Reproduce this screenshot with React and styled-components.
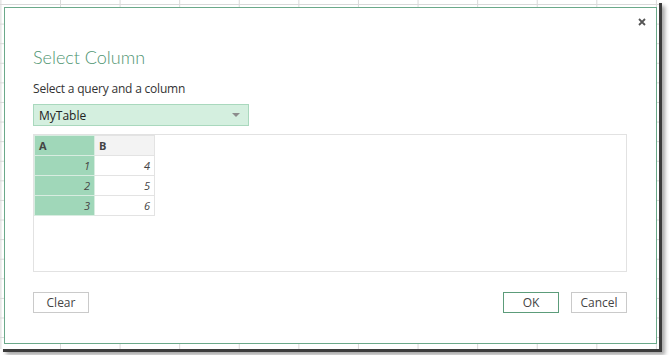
import React from 'react'
import styled, { createGlobalStyle } from 'styled-components';

const GlobalStyle = createGlobalStyle`
  html, body {
    margin: 0;
    padding: 0;
    background: #fff;
  }
  body {
    width: 669px;
    height: 355px;
    overflow: hidden;
    font-family: "Segoe UI", "Open Sans", "Noto Sans", sans-serif;
    color: #333;
  }
`

const Sheet = styled.div`
  width: 659px;
  height: 349px;
  box-sizing: border-box;
  padding: 7px 2px 5px 4px;
  background-color: #fff;
  background-image:
    linear-gradient(to right, #d9d9d9 1px, transparent 1px),
    linear-gradient(to bottom, #d9d9d9 1px, transparent 1px);
  background-size: 59.6px 100%, 100% 19.6px;
  background-position: 0.4px 0, 0 4px;
  box-shadow: 3px 3px 0 #3c3c3c, 6px 6px 4px rgba(0,0,0,0.35);
`

const Dialog = styled.div`
  position: relative;
  height: 100%;
  box-sizing: border-box;
  background: #fff;
  border: 1px solid #6ba98a;
  padding: 0 29px 0 28px;
  display: flex;
  flex-direction: column;
`

const Close = styled.button`
  position: absolute;
  top: 9px;
  right: 9px;
  width: 10px;
  height: 10px;
  padding: 0;
  border: 0;
  background: none;
  display: flex;
  align-items: center;
  justify-content: center;
`

const Title = styled.h1`
  margin: 36px 0 0;
  font-family: "Segoe UI Light", Lato, "Open Sans", sans-serif;
  font-size: 18px;
  line-height: 26px;
  font-weight: 300;
  color: #4f9572;
`

const Label = styled.div`
  margin-top: 10px;
  font-size: 12px;
  letter-spacing: -0.2px;
  line-height: 18px;
  color: #333;
`

const Dropdown = styled.div`
  margin-top: 6px;
  width: 216px;
  height: 22px;
  box-sizing: border-box;
  background: #d4efdf;
  border: 1px solid #a9d8bd;
  display: flex;
  align-items: center;
  justify-content: space-between;
  padding: 0 8px 0 5px;
  font-size: 12px;
  color: #222;
`

const Arrow = styled.span`
  width: 0;
  height: 0;
  border-left: 4px solid transparent;
  border-right: 4px solid transparent;
  border-top: 4px solid #8c8c8c;
`

const Preview = styled.div`
  margin-top: 8px;
  height: 138px;
  box-sizing: border-box;
  border: 1px solid #e2e2e2;
`

const Grid = styled.table`
  border-collapse: collapse;
  font-size: 11px;
  color: #444;
`

const Cell = styled.td`
  width: 60px;
  height: 20px;
  padding: 0 4px;
  box-sizing: border-box;
  border: 1px solid ${props => props.selected ? '#d8ece0' : '#e3e3e3'};
  background: ${props => props.selected ? '#a0d7b9' : '#fff'};
  text-align: right;
  font-style: italic;
`

const Head = styled(Cell)`
  text-align: left;
  font-style: normal;
  font-weight: bold;
  background: ${props => props.selected ? '#a0d7b9' : '#f3f3f3'};
`

const Footer = styled.div`
  margin-top: 20px;
  display: flex;
  align-items: center;
  gap: 12px;
`

const Spacer = styled.div`
  flex: 1;
`

const Button = styled.button`
  width: 56px;
  height: 21px;
  box-sizing: border-box;
  padding: 0;
  background: #fff;
  border: 1px solid ${props => props.primary ? '#5c9c7a' : '#cacaca'};
  font-family: inherit;
  font-size: 12px;
  color: #444;
`

const rows = [[1, 4], [2, 5], [3, 6]]

const App = () => (
  <>
    <GlobalStyle />
    <Sheet>
      <Dialog>
        <Close aria-label="Close">
          <svg width="8" height="8" viewBox="0 0 8 8">
            <path d="M1 1 L7 7 M7 1 L1 7" stroke="#555" strokeWidth="1.8" />
          </svg>
        </Close>
        <Title>Select Column</Title>
        <Label>Select a query and a column</Label>
        <Dropdown>
          <span>MyTable</span>
          <Arrow />
        </Dropdown>
        <Preview>
          <Grid>
            <thead>
              <tr>
                <Head selected>A</Head>
                <Head>B</Head>
              </tr>
            </thead>
            <tbody>
              {rows.map(([a, b]) => (
                <tr key={a}>
                  <Cell selected>{a}</Cell>
                  <Cell>{b}</Cell>
                </tr>
              ))}
            </tbody>
          </Grid>
        </Preview>
        <Footer>
          <Button>Clear</Button>
          <Spacer />
          <Button primary>OK</Button>
          <Button>Cancel</Button>
        </Footer>
      </Dialog>
    </Sheet>
  </>
)

export default App
